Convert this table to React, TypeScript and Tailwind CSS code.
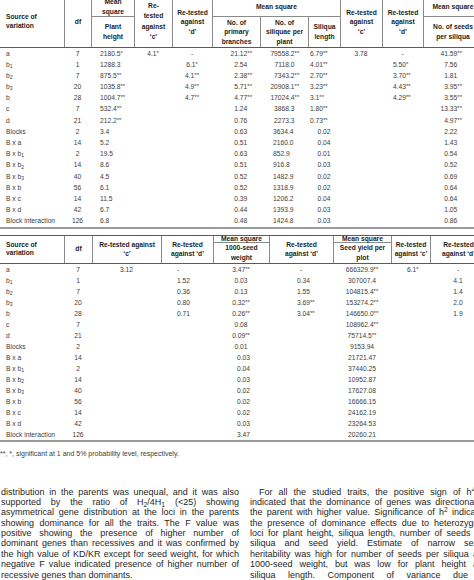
import React from "react";

type Cfg = { k: "l" | "c" | "d"; c?: string; dash?: string };

const T1 = "grid grid-cols-[64px_27px_43px_38px_40px_48px_48px_32px_42px_41px_59px]";
const T2 = "grid grid-cols-[64px_28px_69px_52px_56px_64px_58px_39px_56px]";

function Stars({ s }: { s: string }) {
  if (!s) return null;
  return <span className="text-[6px] align-[1px]">{s}</span>;
}

function split(v: string) {
  const m = v.match(/^(.*?)(\**)$/);
  return m ? [m[1], m[2]] : [v, ""];
}

function Cell({ v, cfg }: { v: string; cfg: Cfg }) {
  if (!v) return <div />;
  if (v === "-" && cfg.dash) return <div className={`whitespace-nowrap ${cfg.dash}`}>-</div>;
  const [n, s] = split(v);
  if (cfg.k === "c")
    return (
      <div className="text-center whitespace-nowrap">
        {n}
        <Stars s={s} />
      </div>
    );
  if (cfg.k === "l")
    return (
      <div className={`text-left whitespace-nowrap ${cfg.c ?? ""}`}>
        {n}
        <Stars s={s} />
      </div>
    );
  const i = n.indexOf(".");
  const ip = i >= 0 ? n.slice(0, i) : n;
  const rest = i >= 0 ? n.slice(i) : "";
  return (
    <div className="flex whitespace-nowrap">
      <span className={`shrink-0 text-right ${cfg.c ?? ""}`}>{ip}</span>
      <span>
        {rest}
        <Stars s={s} />
      </span>
    </div>
  );
}

function Label({ s }: { s: string }) {
  const parts = s.split(/_(\d)/);
  return (
    <div className="pl-[6px] whitespace-nowrap">
      {parts.map((p, i) => (i % 2 === 1 ? <sub key={i}>{p}</sub> : <React.Fragment key={i}>{p}</React.Fragment>))}
    </div>
  );
}

const t1Upper: Cfg[] = [
  { k: "l" },
  { k: "c" },
  { k: "l", c: "pl-[9px]" },
  { k: "c" },
  { k: "c" },
  { k: "d", c: "w-[26px]" },
  { k: "d", c: "w-[29px]" },
  { k: "l", c: "pl-[2px]" },
  { k: "c" },
  { k: "l", c: "pl-[11px]", dash: "text-center" },
  { k: "d", c: "w-[25px]" },
];
const t1Lower: Cfg[] = [
  { k: "l" },
  { k: "c" },
  { k: "l", c: "pl-[9px]" },
  { k: "c" },
  { k: "c" },
  { k: "d", c: "w-[26px]" },
  { k: "l", c: "pl-[13px]" },
  { k: "c" },
  { k: "c" },
  { k: "l", c: "pl-[11px]" },
  { k: "d", c: "w-[25px]" },
];

const t1Rows: string[][] = [
  ["a", "7", "2180.5*", "4.1*", "-", "21.12**", "79558.2**", "6.79**", "3.78", "-", "41.59**"],
  ["b_1", "1", "1288.3", "", "6.1*", "2.54", "7118.0", "4.01**", "", "5.50*", "7.56"],
  ["b_2", "7", "875.5**", "", "4.1**", "2.38**", "7343.2**", "2.70**", "", "3.70**", "1.81"],
  ["b_3", "20", "1035.8**", "", "4.9**", "5.71**", "20908.1**", "3.23**", "", "4.43**", "3.95**"],
  ["b", "28", "1004.7**", "", "4.7**", "4.77**", "17024.4**", "3.1**", "", "4.29**", "3.55**"],
  ["c", "7", "532.4**", "", "", "1.24", "3868.3", "1.80**", "", "", "13.33**"],
  ["d", "21", "212.2**", "", "", "0.76", "2273.3", "0.73**", "", "", "4.97**"],
  ["Blocks", "2", "3.4", "", "", "0.63", "3634.4", "0.02", "", "", "2.22"],
  ["B x a", "14", "5.2", "", "", "0.51", "2160.0", "0.04", "", "", "1.43"],
  ["B x b_1", "2", "19.5", "", "", "0.63", "852.9", "0.01", "", "", "0.54"],
  ["B x b_2", "14", "8.6", "", "", "0.51", "916.8", "0.03", "", "", "0.52"],
  ["B x b_3", "40", "4.5", "", "", "0.52", "1482.9", "0.02", "", "", "0.69"],
  ["B x b", "56", "6.1", "", "", "0.52", "1318.9", "0.02", "", "", "0.64"],
  ["B x c", "14", "11.5", "", "", "0.39", "1206.2", "0.04", "", "", "0.64"],
  ["B x d", "42", "6.7", "", "", "0.44", "1393.9", "0.03", "", "", "1.05"],
  ["Block interaction", "126", "6.8", "", "", "0.48", "1424.8", "0.03", "", "", "0.86"],
];

const t2Upper: Cfg[] = [
  { k: "l" },
  { k: "c" },
  { k: "c" },
  { k: "l", c: "pl-[16px]" },
  { k: "c" },
  { k: "l", c: "pl-[28px]", dash: "text-center" },
  { k: "c" },
  { k: "l", c: "pl-[16px]" },
  { k: "c" },
];
const t2Lower: Cfg[] = [
  { k: "l" },
  { k: "c" },
  { k: "c" },
  { k: "l", c: "pl-[16px]" },
  { k: "l", c: "pl-[24px]" },
  { k: "l", c: "pl-[28px]" },
  { k: "c" },
  { k: "l", c: "pl-[16px]" },
  { k: "c" },
];

const t2Rows: string[][] = [
  ["a", "7", "3.12", "-", "3.47**", "-", "666329.9**", "6.1*", "-"],
  ["b_1", "1", "", "1.52", "0.03", "0.34", "307007.4", "", "4.1"],
  ["b_2", "7", "", "0.36", "0.13", "1.55", "104815.4**", "", "1.4"],
  ["b_3", "20", "", "0.80", "0.32**", "3.69**", "153274.2**", "", "2.0"],
  ["b", "28", "", "0.71", "0.26**", "3.04**", "146650.0**", "", "1.9"],
  ["c", "7", "", "", "0.08", "", "108962.4**", "", ""],
  ["d", "21", "", "", "0.09**", "", "75714.5**", "", ""],
  ["Blocks", "2", "", "", "0.01", "", "9153.94", "", ""],
  ["B x a", "14", "", "", "0.03", "", "21721.47", "", ""],
  ["B x b_1", "2", "", "", "0.04", "", "37440.25", "", ""],
  ["B x b_2", "14", "", "", "0.03", "", "10952.87", "", ""],
  ["B x b_3", "40", "", "", "0.02", "", "17627.08", "", ""],
  ["B x b", "56", "", "", "0.02", "", "16666.15", "", ""],
  ["B x c", "14", "", "", "0.02", "", "24162.19", "", ""],
  ["B x d", "42", "", "", "0.03", "", "23264.53", "", ""],
  ["Block interaction", "126", "", "", "3.47", "", "20260.21", "", ""],
];

const hc = "flex flex-col items-center justify-center text-center border-l border-[#8a8a8a]";

function Lines({ l }: { l: React.ReactNode[] }) {
  return (
    <>
      {l.map((x, i) => (
        <div key={i} className="whitespace-nowrap">
          {x}
        </div>
      ))}
    </>
  );
}

function Table1() {
  return (
    <div className="-mt-[3px] text-[6.7px]">
      <div className={`${T1} grid-rows-[20px_29.5px] border-b border-[#5a5a5a] font-bold text-[#1c1c1c] leading-[9.5px]`}>
        <div className="row-span-2 flex flex-col justify-center pl-[6px] leading-[8.5px]">
          <Lines l={["Source of", "variation"]} />
        </div>
        <div className={`row-span-2 ${hc}`}>df</div>
        <div className={`${hc} border-b`}>
          <Lines l={["Mean", "square"]} />
        </div>
        <div className={`row-span-2 ${hc} leading-[10.5px]`}>
          <Lines l={["Re-", "tested", "against", "‘c’"]} />
        </div>
        <div className={`row-span-2 ${hc}`}>
          <Lines l={["Re-tested", "against", "‘d’"]} />
        </div>
        <div className={`col-span-3 ${hc} border-b`}>Mean square</div>
        <div className={`row-span-2 ${hc}`}>
          <Lines l={["Re-tested", "against", "‘c’"]} />
        </div>
        <div className={`row-span-2 ${hc}`}>
          <Lines l={["Re-tested", "against", "‘d’"]} />
        </div>
        <div className={`${hc} border-b`}>Mean square</div>
        <div className={hc}>
          <Lines l={["Plant", "height"]} />
        </div>
        <div className={hc}>
          <Lines l={["No. of", "primary", "branches"]} />
        </div>
        <div className={hc}>
          <Lines l={["No. of", "siliquae per", "plant"]} />
        </div>
        <div className={hc}>
          <Lines l={["Siliqua", "length"]} />
        </div>
        <div className={hc}>
          <Lines l={["No. of seeds", "per siliqua"]} />
        </div>
      </div>
      <div className="border-b-2 border-[#9a9a9a]">
        {t1Rows.map((r, ri) => {
          const cfg = ri >= 7 ? t1Lower : t1Upper;
          return (
            <div key={ri} className={`${T1} h-[11.2px] leading-[11.2px]`}>
              <Label s={r[0]} />
              {r.slice(1).map((v, ci) => (
                <Cell key={ci} v={v} cfg={cfg[ci + 1]} />
              ))}
            </div>
          );
        })}
      </div>
    </div>
  );
}

function Table2() {
  return (
    <div className="mt-[6px] text-[6.7px]">
      <div className={`${T2} grid-rows-[7px_20px] border-t border-b border-[#5a5a5a] font-bold text-[#1c1c1c] leading-[9.5px]`}>
        <div className="row-span-2 flex flex-col justify-center pl-[6px] leading-[8.5px]">
          <Lines l={["Source of", "variation"]} />
        </div>
        <div className={`row-span-2 ${hc}`}>df</div>
        <div className={`row-span-2 ${hc}`}>
          <Lines l={["Re-tested against", "‘c’"]} />
        </div>
        <div className={`row-span-2 ${hc}`}>
          <Lines l={["Re-tested", "against ‘d’"]} />
        </div>
        <div className={`${hc} border-b leading-[6px]`}>Mean square</div>
        <div className={`row-span-2 ${hc}`}>
          <Lines l={["Re-tested", "against ‘d’"]} />
        </div>
        <div className={`${hc} border-b leading-[6px]`}>Mean square</div>
        <div className={`row-span-2 ${hc}`}>
          <Lines l={["Re-tested", "against ‘c’"]} />
        </div>
        <div className={`row-span-2 ${hc}`}>
          <Lines l={["Re-tested", "against ‘d’"]} />
        </div>
        <div className={hc}>
          <Lines l={["1000-seed", "weight"]} />
        </div>
        <div className={hc}>
          <Lines l={["Seed yield per", "plot"]} />
        </div>
      </div>
      <div className="border-b-2 border-[#9a9a9a]">
        {t2Rows.map((r, ri) => {
          const cfg = ri >= 8 ? t2Lower : t2Upper;
          return (
            <div key={ri} className={`${T2} h-[11px] leading-[11px]`}>
              <Label s={r[0]} />
              {r.slice(1).map((v, ci) => (
                <Cell key={ci} v={v} cfg={cfg[ci + 1]} />
              ))}
            </div>
          );
        })}
      </div>
    </div>
  );
}

const jl = "text-justify [text-align-last:justify] h-[10.4px] overflow-hidden";

const leftLines: React.ReactNode[] = [
  "distribution in the parents was unequal, and it was also",
  <>
    supported by the ratio of H<sub>2</sub>/4H<sub>1</sub> (&lt;25) showing
  </>,
  "asymmetrical gene distribution at the loci in the parents",
  "showing dominance for all the traits. The F value was",
  "positive showing the presence of higher number of",
  "dominant genes than recessives and it was confirmed by",
  "the high value of KD/KR except for seed weight, for which",
  "negative F value indicated presence of higher number of",
];

const rightLines: React.ReactNode[] = [
  <>
    For all the studied traits, the positive sign of h<sup>2</sup>/H<sub>2</sub>
  </>,
  "indicated that the dominance of genes was directional to",
  <>
    the parent with higher value. Significance of h<sup>2</sup> indicated
  </>,
  "the presence of dominance effects due to heterozygous",
  "loci for plant height, siliqua length, number of seeds per",
  "siliqua and seed yield. Estimate of narrow sense",
  "heritability was high for number of seeds per siliqua and",
  "1000-seed weight, but was low for plant height and",
  "siliqua length. Component of variance due to",
];

export default function App() {
  return (
    <div className="w-[474px] h-[580px] overflow-hidden bg-white font-['Liberation_Sans',Arial,sans-serif] text-[#3c3c3c]">
      <Table1 />
      <Table2 />
      <div className="mt-[7px] text-[7px] leading-[10px] whitespace-nowrap">
        **, *, significant at 1 and 5% probability level, respectively.
      </div>
      <div className="mt-[28px] flex text-[9px] leading-[10.4px] text-[#262626]">
        <div className="ml-[1px] w-[238px] shrink-0">
          {leftLines.map((l, i) => (
            <div key={i} className={jl}>
              {l}
            </div>
          ))}
          <div className="h-[10.4px] whitespace-nowrap">recessive genes than dominants.</div>
        </div>
        <div className="ml-[11px] w-[238px] shrink-0">
          {rightLines.map((l, i) => (
            <div key={i} className={`${jl} ${i === 0 ? "pl-[9px]" : ""}`}>
              {l}
            </div>
          ))}
        </div>
      </div>
    </div>
  );
}
